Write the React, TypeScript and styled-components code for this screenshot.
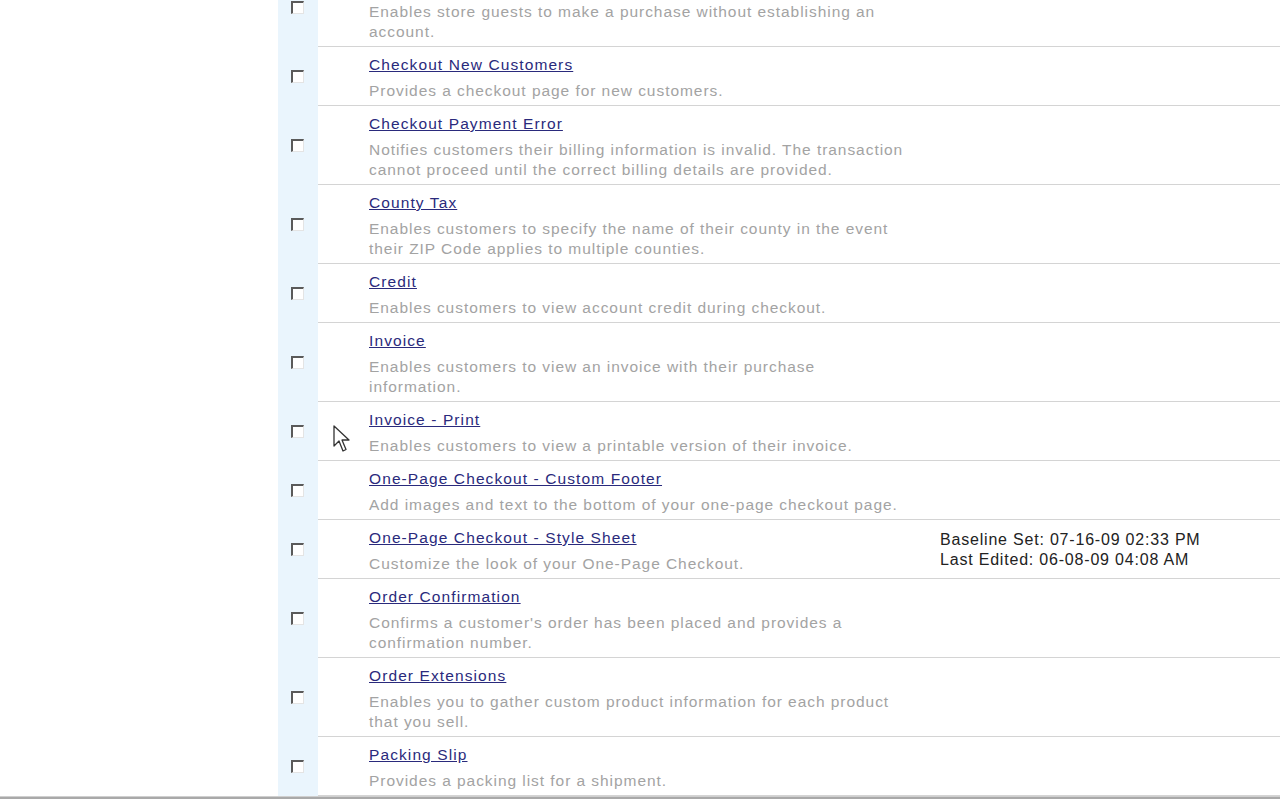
import React from "react";
import styled, { createGlobalStyle } from "styled-components";

const GlobalStyle = createGlobalStyle`
  html, body {
    margin: 0;
    padding: 0;
    background: #fff;
    height: 799px;
    overflow: hidden;
  }
  body {
    font-family: "Liberation Sans", Arial, sans-serif;
  }
`;

const Page = styled.div`
  position: relative;
  height: 799px;
  display: flex;
  flex-direction: column;
  overflow: hidden;
`;

const Table = styled.div`
  flex: 1;
  display: flex;
  flex-direction: column;
  margin-top: -32px;
  padding-left: 278px;
`;

const Row = styled.div`
  display: flex;
`;

const CheckCell = styled.div`
  width: 40px;
  flex: none;
  background: #eaf5fd;
  display: flex;
  align-items: center;
  padding-left: 13px;
  box-sizing: border-box;
`;

const Check = styled.span`
  width: 13px;
  height: 13px;
  box-sizing: border-box;
  border-top: 2px solid #5a5a5a;
  border-left: 2px solid #5a5a5a;
  border-right: 1px solid #e4e4e4;
  border-bottom: 1px solid #e4e4e4;
  background: #fff;
`;

const Content = styled.div`
  flex: 1;
  display: grid;
  grid-template-columns: 571px 1fr;
  align-items: center;
  padding: 8px 0 4px 51px;
  border-bottom: 1px solid #d4d4d4;
`;

const Info = styled.div`
  display: flex;
  flex-direction: column;
`;

const Title = styled.a`
  font-size: 15.5px;
  line-height: 20px;
  letter-spacing: 1.1px;
  color: #2a2a7c;
  text-decoration: underline;
  margin-bottom: 6px;
  white-space: nowrap;
  width: fit-content;
`;

const Desc = styled.div`
  font-size: 15.5px;
  line-height: 20px;
  letter-spacing: 0.95px;
  color: #a3a3a3;
  white-space: nowrap;
`;

const Meta = styled.div`
  font-size: 16px;
  line-height: 20px;
  letter-spacing: 0.8px;
  color: #222;
  white-space: nowrap;
  margin-top: -2px;
`;

const BottomBar = styled.div`
  height: 4px;
  flex: none;
  background: #a9a9a9;
  border-top: 1px solid #cfcfcf;
`;

const Cursor = styled.svg`
  position: absolute;
  left: 333px;
  top: 425px;
`;

type Item = {
  title: string;
  desc: string[];
  meta?: string[];
};

const items: Item[] = [
  {
    title: "Checkout Anonymous Customers",
    desc: [
      "Enables store guests to make a purchase without establishing an",
      "account.",
    ],
  },
  { title: "Checkout New Customers", desc: ["Provides a checkout page for new customers."] },
  {
    title: "Checkout Payment Error",
    desc: [
      "Notifies customers their billing information is invalid. The transaction",
      "cannot proceed until the correct billing details are provided.",
    ],
  },
  {
    title: "County Tax",
    desc: [
      "Enables customers to specify the name of their county in the event",
      "their ZIP Code applies to multiple counties.",
    ],
  },
  { title: "Credit", desc: ["Enables customers to view account credit during checkout."] },
  {
    title: "Invoice",
    desc: ["Enables customers to view an invoice with their purchase", "information."],
  },
  { title: "Invoice - Print", desc: ["Enables customers to view a printable version of their invoice."] },
  {
    title: "One-Page Checkout - Custom Footer",
    desc: ["Add images and text to the bottom of your one-page checkout page."],
  },
  {
    title: "One-Page Checkout - Style Sheet",
    desc: ["Customize the look of your One-Page Checkout."],
    meta: ["Baseline Set: 07-16-09 02:33 PM", "Last Edited: 06-08-09 04:08 AM"],
  },
  {
    title: "Order Confirmation",
    desc: ["Confirms a customer's order has been placed and provides a", "confirmation number."],
  },
  {
    title: "Order Extensions",
    desc: ["Enables you to gather custom product information for each product", "that you sell."],
  },
  { title: "Packing Slip", desc: ["Provides a packing list for a shipment."] },
];

export default function App() {
  return (
    <Page>
      <GlobalStyle />
      <Table>
        {items.map((item) => (
          <Row key={item.title}>
            <CheckCell>
              <Check />
            </CheckCell>
            <Content>
              <Info>
                <Title href="#">{item.title}</Title>
                {item.desc.map((line) => (
                  <Desc key={line}>{line}</Desc>
                ))}
              </Info>
              {item.meta && (
                <Meta>
                  {item.meta.map((line) => (
                    <div key={line}>{line}</div>
                  ))}
                </Meta>
              )}
            </Content>
          </Row>
        ))}
      </Table>
      <BottomBar />
      <Cursor width="18" height="28" viewBox="0 0 18 28">
        <path
          d="M1 1 L1 21 L6 16 L10 26 L13 24.5 L9 15 L16 15 Z"
          fill="#fff"
          stroke="#333"
          strokeWidth="1.3"
          strokeLinejoin="round"
        />
      </Cursor>
    </Page>
  );
}
